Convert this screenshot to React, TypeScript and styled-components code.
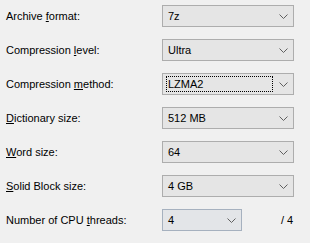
import React from "react";
import styled, { createGlobalStyle } from "styled-components";

const Global = createGlobalStyle`
  html, body { margin: 0; padding: 0; background: #f0f0f0; }
  body { font-family: "Liberation Sans", Arial, sans-serif; font-size: 11px; color: #000; }
`;

const Panel = styled.div`
  display: grid;
  grid-template-columns: 156px auto;
  grid-auto-rows: 22px;
  row-gap: 12px;
  padding: 5px 0 0 6px;
  width: 310px;
  height: 243px;
  box-sizing: border-box;
  background: #f0f0f0;
`;

const Label = styled.label`
  display: flex;
  align-items: center;
  white-space: pre;
`;

const Field = styled.div`
  display: flex;
  align-items: center;
`;

const Combo = styled.div<{ $w: number; $hot?: boolean }>`
  position: relative;
  box-sizing: border-box;
  width: ${(p) => p.$w}px;
  height: 22px;
  border: 1px solid ${(p) => (p.$hot ? "#a6b1bf" : "#adadad")};
  background: ${(p) => (p.$hot ? "#e3e5e8" : "#e5e5e5")};
  display: flex;
  align-items: center;
  padding-left: 3px;
`;

const Value = styled.span<{ $focus?: boolean }>`
  flex: 1;
  align-self: stretch;
  display: flex;
  align-items: center;
  margin: 2px 20px 2px 0;
  padding-left: 1px;
  border: 1px dotted ${(p) => (p.$focus ? "#000" : "transparent")};
`;

const Chevron = styled.svg`
  position: absolute;
  right: 5px;
  top: 8px;
`;

const Total = styled.span`
  margin-left: 39px;
`;

const rows = [
  { pre: "Archive ", key: "f", post: "ormat:", val: "7z" },
  { pre: "Compression ", key: "l", post: "evel:", val: "Ultra" },
  { pre: "Compression ", key: "m", post: "ethod:", val: "LZMA2", focus: true },
  { pre: "", key: "D", post: "ictionary size:", val: "512 MB" },
  { pre: "", key: "W", post: "ord size:", val: "64" },
  { pre: "", key: "S", post: "olid Block size:", val: "4 GB" },
];

function Drop({ w, value, focus, hot }: { w: number; value: string; focus?: boolean; hot?: boolean }) {
  return (
    <Combo $w={w} $hot={hot}>
      <Value $focus={focus}>{value}</Value>
      <Chevron width="9" height="5" viewBox="0 0 9 5">
        <path d="M0.5 0.5 L4.5 4.5 L8.5 0.5" fill="none" stroke="#606060" strokeWidth="1" />
      </Chevron>
    </Combo>
  );
}

export default function App() {
  return (
    <>
      <Global />
      <Panel>
        {rows.map((r) => (
          <React.Fragment key={r.val}>
            <Label>
              <span>
                {r.pre}
                <u>{r.key}</u>
                {r.post}
              </span>
            </Label>
            <Field>
              <Drop w={132} value={r.val} focus={r.focus} />
            </Field>
          </React.Fragment>
        ))}
        <Label>
          <span>
            Number of CPU <u>t</u>hreads:
          </span>
        </Label>
        <Field>
          <Drop w={80} value="4" hot />
          <Total>/ 4</Total>
        </Field>
      </Panel>
    </>
  );
}
